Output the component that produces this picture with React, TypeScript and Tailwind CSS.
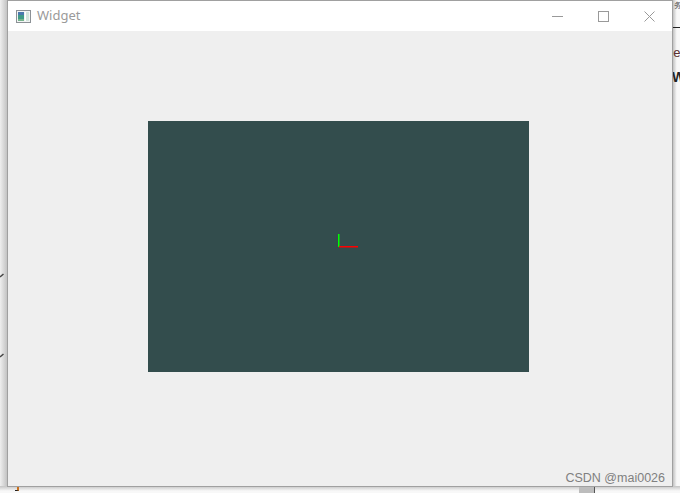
import React from 'react';

const font = { fontFamily: '"Microsoft YaHei", "Noto Sans", sans-serif' };
const sans = { fontFamily: '"Liberation Sans", sans-serif' };

const WindowIcon = () => (
    <svg width="15" height="13" viewBox="0 0 15 13" className="shrink-0">
        <rect x="0.5" y="0.5" width="14" height="12" fill="#f2f4f4" stroke="#8c9196" />
        <rect x="2" y="2" width="6" height="9" fill="#3f9a86" />
        <rect x="2" y="2" width="6" height="3" fill="#4a78ad" />
        <rect x="2" y="9" width="6" height="2" fill="#76b48c" />
        <rect x="9" y="2" width="1" height="9" fill="#ffffff" />
        <rect x="10" y="2" width="3" height="9" fill="#d3e4dc" />
    </svg>
);

const Mark = ({ top }: { top: string }) => (
    <svg width="4" height="5" viewBox="0 0 4 5" className={`absolute left-0 ${top}`}>
        <path d="M0 4 L3.5 1" stroke="#444444" strokeWidth="1.5" fill="none" />
    </svg>
);

export default function App() {
    return (
        <div className="relative w-[680px] h-[493px] overflow-hidden bg-[#f8f8f8] pl-[8px] pt-[1px]">
            {/* bits of the desktop behind the window */}
            <div className="absolute left-0 top-0 w-[680px] h-[1px] bg-[#9a9a9a]" />
            <div className="absolute left-0 top-0 w-[8px] h-[493px] bg-gradient-to-r from-[#efefef] to-[#bdbdbd]" />
            <div className="absolute left-[672px] top-0 w-[8px] h-[493px] bg-gradient-to-r from-[#b4b4b4] to-[#f8f8f8] to-60%" />
            <div className="absolute left-0 top-[486px] w-[680px] h-[7px] bg-gradient-to-b from-[#c4c4c4] to-[#f8f8f8] to-70%" />
            <div className="absolute left-[672px] top-[27px] w-[8px] h-[1px] bg-[#222222]" />
            <span className="absolute left-[674px] top-[1px] text-[8px] leading-[9px] text-[#555555]" style={sans}>务</span>
            <span className="absolute left-[666px] top-[46px] text-[13px] leading-[14px] text-[#5a3030]" style={sans}>pe</span>
            <span className="absolute left-[672px] top-[69px] text-[14px] leading-[16px] font-bold text-[#222222]" style={sans}>W</span>
            <Mark top="top-[273px]" />
            <Mark top="top-[353px]" />
            <div className="absolute left-[15px] top-[486px] w-[4px] h-[5px] border-r-2 border-b border-r-[#c8701e] border-b-[#222222]" />
            <div className="absolute left-[579px] top-[486px] w-[16px] h-[7px] bg-[#bdbdbd] border-r border-[#555555]" />

            <div className="relative flex flex-col w-[664px] h-[485px] bg-[#efefef] shadow-[0_0_0_1px_#a0a0a0]">
                <div className="flex items-center h-[30px] bg-white shrink-0 pl-[8px]">
                    <WindowIcon />
                    <span className="ml-[6px] text-[13px] text-[#9a9a9a]" style={font}>Widget</span>
                    <div className="ml-auto flex items-center">
                        <div className="w-[46px] flex justify-center">
                            <svg width="11" height="11" viewBox="0 0 11 11"><rect x="0" y="5" width="11" height="1" fill="#999999" /></svg>
                        </div>
                        <div className="w-[46px] flex justify-center">
                            <svg width="11" height="11" viewBox="0 0 11 11"><rect x="0.5" y="0.5" width="10" height="10" fill="none" stroke="#999999" /></svg>
                        </div>
                        <div className="w-[46px] flex justify-center">
                            <svg width="11" height="11" viewBox="0 0 11 11"><path d="M0.5 0.5 L10.5 10.5 M10.5 0.5 L0.5 10.5" stroke="#999999" fill="none" /></svg>
                        </div>
                    </div>
                </div>
                <div className="flex-1 pl-[140px] pt-[90px]">
                    <div className="relative w-[381px] h-[251px] bg-[#334d4d]">
                        <svg width="24" height="16" viewBox="0 0 24 16" className="absolute left-[190px] top-[112px]">
                            <rect x="0" y="1" width="1.5" height="13" fill="#00ff00" />
                            <rect x="1" y="13" width="19" height="1.5" fill="#ff0000" />
                        </svg>
                    </div>
                </div>
                <span className="absolute right-[7px] bottom-[1px] text-[12.5px] leading-[14px] text-[#808080]" style={sans}>CSDN @mai0026</span>
            </div>
        </div>
    );
}
